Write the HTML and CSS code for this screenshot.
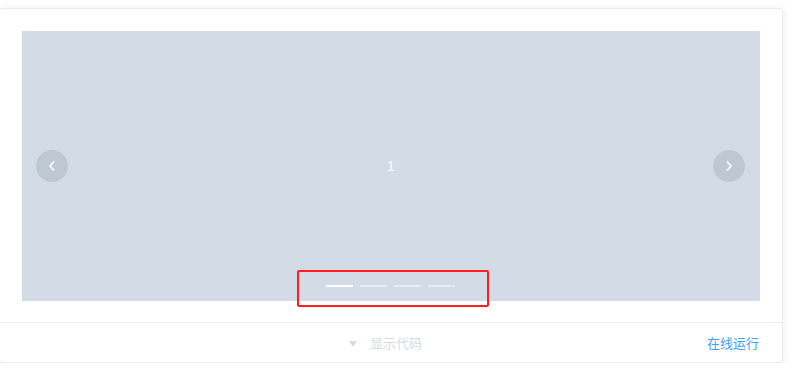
FILE: index.html
```html
<!DOCTYPE html>
<html lang="zh-CN">
<head>
    <meta charset="UTF-8">
    <meta name="viewport" content="width=device-width, initial-scale=1.0">
    <title>走马灯</title>
    <link rel="stylesheet" href="styles.css">
</head>
<body>
    <div class="demo-block">
        <div class="source">
            <div class="carousel">
                <div class="slide">1</div>
                <button class="arrow arrow-left">
                    <svg width="8" height="12" viewBox="0 0 8 12"><path d="M6 1.5 L2 6 L6 10.5" fill="none" stroke="#fff" stroke-width="1.6"/></svg>
                </button>
                <button class="arrow arrow-right">
                    <svg width="8" height="12" viewBox="0 0 8 12"><path d="M2 1.5 L6 6 L2 10.5" fill="none" stroke="#fff" stroke-width="1.6"/></svg>
                </button>
                <ul class="indicators">
                    <li class="active"><span></span></li>
                    <li><span></span></li>
                    <li><span></span></li>
                    <li><span></span></li>
                </ul>
                <div class="highlight"></div>
            </div>
        </div>
        <div class="control">
            <span></span>
            <div class="toggle">
                <i class="caret"></i>
                <span>显示代码</span>
            </div>
            <a class="run" href="#">在线运行</a>
        </div>
    </div>
</body>
</html>
```

FILE: styles.css
```css
body {
    margin: 0;
    padding-top: 8px;
    background: #fff;
    font-family: "Noto Sans CJK SC", "Liberation Sans", sans-serif;
}
.demo-block {
    width: 784px;
    box-sizing: border-box;
    margin-left: -1px;
    border: 1px solid #ebebeb;
    border-radius: 3px;
    box-shadow: 0 0 8px 0 rgba(232, 237, 250, 0.6), 0 2px 4px 0 rgba(232, 237, 250, 0.5);
}
.source {
    padding: 22px 22px 21px;
}
.carousel {
    position: relative;
    height: 270px;
    background-color: #d3dce6;
}
.slide {
    height: 100%;
    display: flex;
    justify-content: center;
    align-items: center;
    color: #fff;
    font-family: "Liberation Sans", sans-serif;
    font-size: 14px;
}
.arrow {
    position: absolute;
    top: 119px;
    width: 32px;
    height: 32px;
    border: none;
    border-radius: 50%;
    padding: 0;
    background-color: rgba(31, 45, 61, 0.11);
    display: flex;
    justify-content: center;
    align-items: center;
}
.arrow-left {
    left: 14px;
}
.arrow-right {
    right: 15px;
}
.indicators {
    position: absolute;
    left: 0;
    right: 0;
    bottom: 14px;
    margin: 0;
    padding: 0 2px 0 0;
    list-style: none;
    display: flex;
    justify-content: center;
    gap: 7px;
}
.indicators li span {
    display: block;
    width: 27px;
    height: 2px;
    background-color: rgba(255, 255, 255, 0.48);
}
.indicators li.active span {
    background-color: #fff;
}
.highlight {
    position: absolute;
    left: 275px;
    top: 239px;
    width: 192px;
    height: 37px;
    box-sizing: border-box;
    border: 2px solid #ff1f1f;
    border-radius: 2px;
}
.control {
    height: 39px;
    border-top: 1px solid #eaeefb;
    display: grid;
    grid-template-columns: 1fr auto 1fr;
    align-items: center;
    padding-right: 23px;
    font-size: 13px;
}
.toggle {
    display: flex;
    align-items: center;
    gap: 13px;
    color: #d3dce6;
    padding-right: 10px;
    padding-left: 22px;
}
.caret {
    width: 0;
    height: 0;
    border-left: 4px solid transparent;
    border-right: 4px solid transparent;
    border-top: 6px solid #d3dce6;
    margin-top: 2px;
}
.run {
    justify-self: end;
    color: #409eff;
    text-decoration: none;
}
```
